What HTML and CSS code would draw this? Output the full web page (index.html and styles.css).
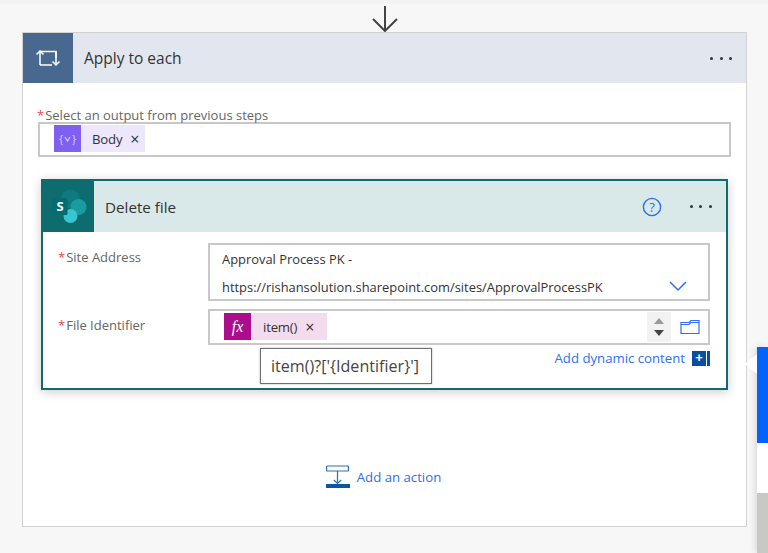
FILE: index.html
```html
<!DOCTYPE html>
<html lang="en">
<head>
<meta charset="utf-8">
<title>Apply to each</title>
<link rel="stylesheet" href="styles.css">
</head>
<body>
<main class="canvas">
  <div class="topstrip"></div>
  <div class="connector">
    <svg width="26" height="26" viewBox="0 0 26 26"><path d="M13 0V25M1 13L13 25L25 13" fill="none" stroke="#444" stroke-width="2"/></svg>
  </div>
  <section class="loop">
    <header class="loop-head">
      <div class="loop-icon">
        <svg width="26" height="20" viewBox="0 0 26 20" fill="none" stroke="#fff" stroke-width="1.500"><path d="M5 17V3.500H21V10"/><path d="M1.500 6.500L5 3L8.500 6.500"/><path d="M21 3.500V17"/><path d="M17.500 13.500L21 17L24.500 13.500" /><path d="M5 17H17"/></svg>
      </div>
      <h2 class="loop-title">Apply to each</h2>
      <div class="dots"><i></i><i></i><i></i></div>
    </header>
    <div class="loop-body">
      <label class="output-label"><span class="req">*</span>Select an output from previous steps</label>
      <div class="output-box">
        <div class="token token-body">
          <span class="token-icon token-icon-body">{<svg width="7" height="6" viewBox="0 0 7 6"><path d="M1 1L3.500 5L6 1" fill="none" stroke="#d9ccff" stroke-width="1.200"/></svg>}</span>
          <span class="token-text">Body</span><span class="token-x">×</span>
        </div>
      </div>
      <section class="action">
        <header class="action-head">
          <div class="action-icon">
            <svg width="36" height="34" viewBox="0 0 36 34">
              <circle cx="19.500" cy="10" r="9.500" fill="#0e7a80"/>
              <circle cx="27.500" cy="18" r="8" fill="#1a9ba1"/>
              <circle cx="19.500" cy="27" r="7" fill="#37c6d0"/>
              <rect x="1.500" y="9" width="15" height="17" rx="1.500" fill="#036c70"/>
              <text x="9" y="22" class="sp-letter" text-anchor="middle">S</text>
            </svg>
          </div>
          <h3 class="action-title">Delete file</h3>
          <svg class="help" width="20" height="20" viewBox="0 0 20 20"><circle cx="10" cy="10" r="8.600" fill="none" stroke="#2d6ff2" stroke-width="1.400"/><text x="10" y="14.500" class="help-mark" text-anchor="middle">?</text></svg>
          <div class="dots dots-action"><i></i><i></i><i></i></div>
        </header>
        <div class="action-body">
          <div class="field">
            <label class="field-label"><span class="req">*</span>Site Address</label>
            <div class="site-box">
              <div class="site-line">Approval Process PK -</div>
              <div class="site-line site-url">https://rishansolution.sharepoint.com/sites/ApprovalProcessPK</div>
              <svg class="chevron" width="20" height="12" viewBox="0 0 20 12"><path d="M2 2L10 10L18 2" fill="none" stroke="#2d6ff2" stroke-width="1.500"/></svg>
            </div>
          </div>
          <div class="field field-file">
            <label class="field-label"><span class="req">*</span>File Identifier</label>
            <div class="file-box">
              <div class="token token-fx">
                <span class="token-icon token-icon-fx">fx</span>
                <span class="token-text">item()</span><span class="token-x">×</span>
              </div>
              <div class="spinner"><i class="up"></i><i class="down"></i></div>
              <svg class="folder" width="20" height="16" viewBox="0 0 20 16"><path d="M1 14.500V3.500H9L11 1.500H19V14.500Z M1 5.500H9L11 3.500H19" fill="none" stroke="#2d6ff2" stroke-width="1.200"/></svg>
            </div>
          </div>
          <div class="dynamic">
            <a class="link">Add dynamic content</a>
            <span class="dyn-icon"><span class="dyn-plus">+</span><span class="dyn-bar"></span></span>
          </div>
          <div class="tooltip">item()?['{Identifier}']</div>
        </div>
      </section>
      <div class="add-action">
        <svg width="25" height="24" viewBox="0 0 24 24" preserveAspectRatio="none"><rect x="1.500" y="1" width="21" height="5" rx="0.500" fill="#fff" stroke="#2a73b8" stroke-width="1.200"/><path d="M12 6V18M8.500 15L12 18.500L15.500 15" fill="none" stroke="#2a73b8" stroke-width="1.200"/><rect x="1" y="19" width="23" height="4" fill="#0a54a8"/></svg>
        <a class="link">Add an action</a>
      </div>
    </div>
  </section>
  <aside class="sidepanel">
    <div class="side-notch"></div>
    <div class="side-blue"></div>
    <div class="side-gray"></div>
  </aside>
</main>
</body>
</html>
```
FILE: styles.css
```css
* { box-sizing: border-box; }
html, body { margin: 0; height: 100%; }
body { background: #f7f7f7; font-family: "Open Sans", "Noto Sans", sans-serif; overflow: hidden; color: #333; }
.canvas { position: relative; width: 768px; height: 553px; overflow: hidden; padding: 6px 21px 0 22px; }
.topstrip { position: absolute; left: 0; right: 0; top: 0; height: 4px; background: #f3f3f3; }
.connector { display: flex; justify-content: center; height: 26px; padding-left: 1px; }

.loop { width: 725px; height: 495px; background: #fff; border: 1px solid #d0d2d3; }
.loop-head { display: flex; align-items: center; height: 50px; background: #e2e7ef; }
.loop-icon { width: 50px; height: 50px; background: #48688f; display: flex; align-items: center; justify-content: center; }
.loop-title { margin: 0 0 0 11px; font-size: 15.500px; font-weight: 400; color: #333; flex: 1; }
.dots { display: flex; gap: 6.500px; padding-right: 14px; }
.dots i { width: 3px; height: 3px; border-radius: 50%; background: #333; }

.loop-body { padding: 24px 15px 0 15px; }
.output-label { display: block; font-size: 13px; line-height: 16px; color: #666; height: 16px; margin-left: -1px; }
.req { color: #e8464f; margin-right: 1px; }
.output-box { height: 35px; border: 2px solid #c8c8c8; padding: 1px 14px; margin-top: -1px; background: #fff; }
.token { display: inline-flex; align-items: center; height: 27px; }
.token-body { background: #ede7fd; width: 91px; }
.token-icon { width: 27px; height: 27px; flex: none; display: flex; align-items: center; justify-content: center; color: #d9ccff; font-size: 11px; }
.token-icon-body { background: #8060f0; }
.token-icon svg { margin: 0 1px; }
.token-text { font-size: 13.200px; margin-left: 11px; color: #333; letter-spacing: -0.200px; }
.token-x { font-size: 16px; line-height: 16px; margin-left: 8px; color: #333; }

.action { width: 687px; height: 211px; margin: 22px 0 0 3px; border: 2px solid #0f6c6e; background: #fff; box-shadow: 0 2px 10px rgba(0,0,0,0.2); }
.action-head { display: flex; align-items: center; height: 51px; background: #d9e8e8; }
.action-icon { width: 51px; height: 51px; background: #0f6c6e; display: flex; align-items: center; justify-content: center; margin-top: -1px; }
.sp-letter { font: 700 13px "Open Sans", sans-serif; fill: #fff; }
.action-title { margin: 0 0 0 11px; font-size: 15.200px; font-weight: 400; color: #333; flex: 1; }
.help { margin-right: 27.500px; }
.help-mark { font: 400 13px "Open Sans", sans-serif; fill: #2d6ff2; }
.dots-action { padding-right: 14.500px; }

.action-body { position: relative; padding: 11px 16px 0 15px; }
.field { display: flex; }
.field-file { margin-top: 8px; }
.field-label { width: 150px; flex: none; font-size: 13px; color: #666; padding-top: 6px; line-height: 17px; }
.field-file .field-label { padding-top: 8px; }
.site-box { position: relative; width: 502px; height: 58px; flex: none; border: 2px solid #c8c8c8; padding: 6px 10px 0 12px; }
.site-line { font-size: 12.900px; line-height: 17px; color: #333; white-space: nowrap; }
.site-url { margin-top: 11px; }
.chevron { position: absolute; right: 20px; bottom: 7px; }
.file-box { display: flex; align-items: center; width: 502px; height: 36px; flex: none; border: 2px solid #c8c8c8; padding: 0 8px 1px 14px; }
.token-fx { background: #f4dcef; width: 103px; }
.token-fx .token-text { margin-left: 12px; }
.token-icon-fx { background: #ab0d8d; color: #fff; font: italic 400 16px "Liberation Serif", serif; }
.spinner { margin-left: auto; width: 24px; height: 30px; background: #f2f2f2; display: flex; flex-direction: column; align-items: center; justify-content: center; gap: 6px; margin-right: 9px; }
.spinner i { width: 0; height: 0; border-left: 5px solid transparent; border-right: 5px solid transparent; }
.spinner .up { border-bottom: 6px solid #999; }
.spinner .down { border-top: 6px solid #444; }

.dynamic { display: flex; justify-content: flex-end; align-items: center; height: 24px; gap: 7px; margin-top: 1px; }
.link { font-size: 13.200px; color: #2d6ff2; }
.dyn-icon { display: flex; gap: 1px; height: 15px; }
.dyn-plus { width: 14px; height: 15px; background: #0a4ea3; color: #fff; font: 700 13px/14px "Liberation Sans", sans-serif; text-align: center; }
.dyn-bar { width: 3px; height: 15px; background: #0a4ea3; }

.tooltip { position: absolute; left: 217px; top: 116px; width: 172px; height: 36px; background: #fff; border: 1px solid #6f6f6f; box-shadow: 0 0 2px rgba(0,0,0,0.3); font-size: 16.100px; line-height: 34px; padding-left: 10px; color: #444; white-space: nowrap; }

.add-action { display: flex; align-items: center; justify-content: center; gap: 7px; margin-top: 75px; margin-left: -3px; }

.sidepanel { position: absolute; left: 757px; top: 347px; width: 11px; height: 206px; background: #fff; box-shadow: -2px 0 6px rgba(0,0,0,0.12); }
.side-blue { height: 96px; background: #0563fa; }
.side-gray { height: 60px; margin-top: 50px; background: #c8c9c5; }
.side-notch { position: absolute; left: -12px; top: 7px; width: 0; height: 0; border-top: 10px solid transparent; border-bottom: 10px solid transparent; border-right: 12px solid #fff; }
```
